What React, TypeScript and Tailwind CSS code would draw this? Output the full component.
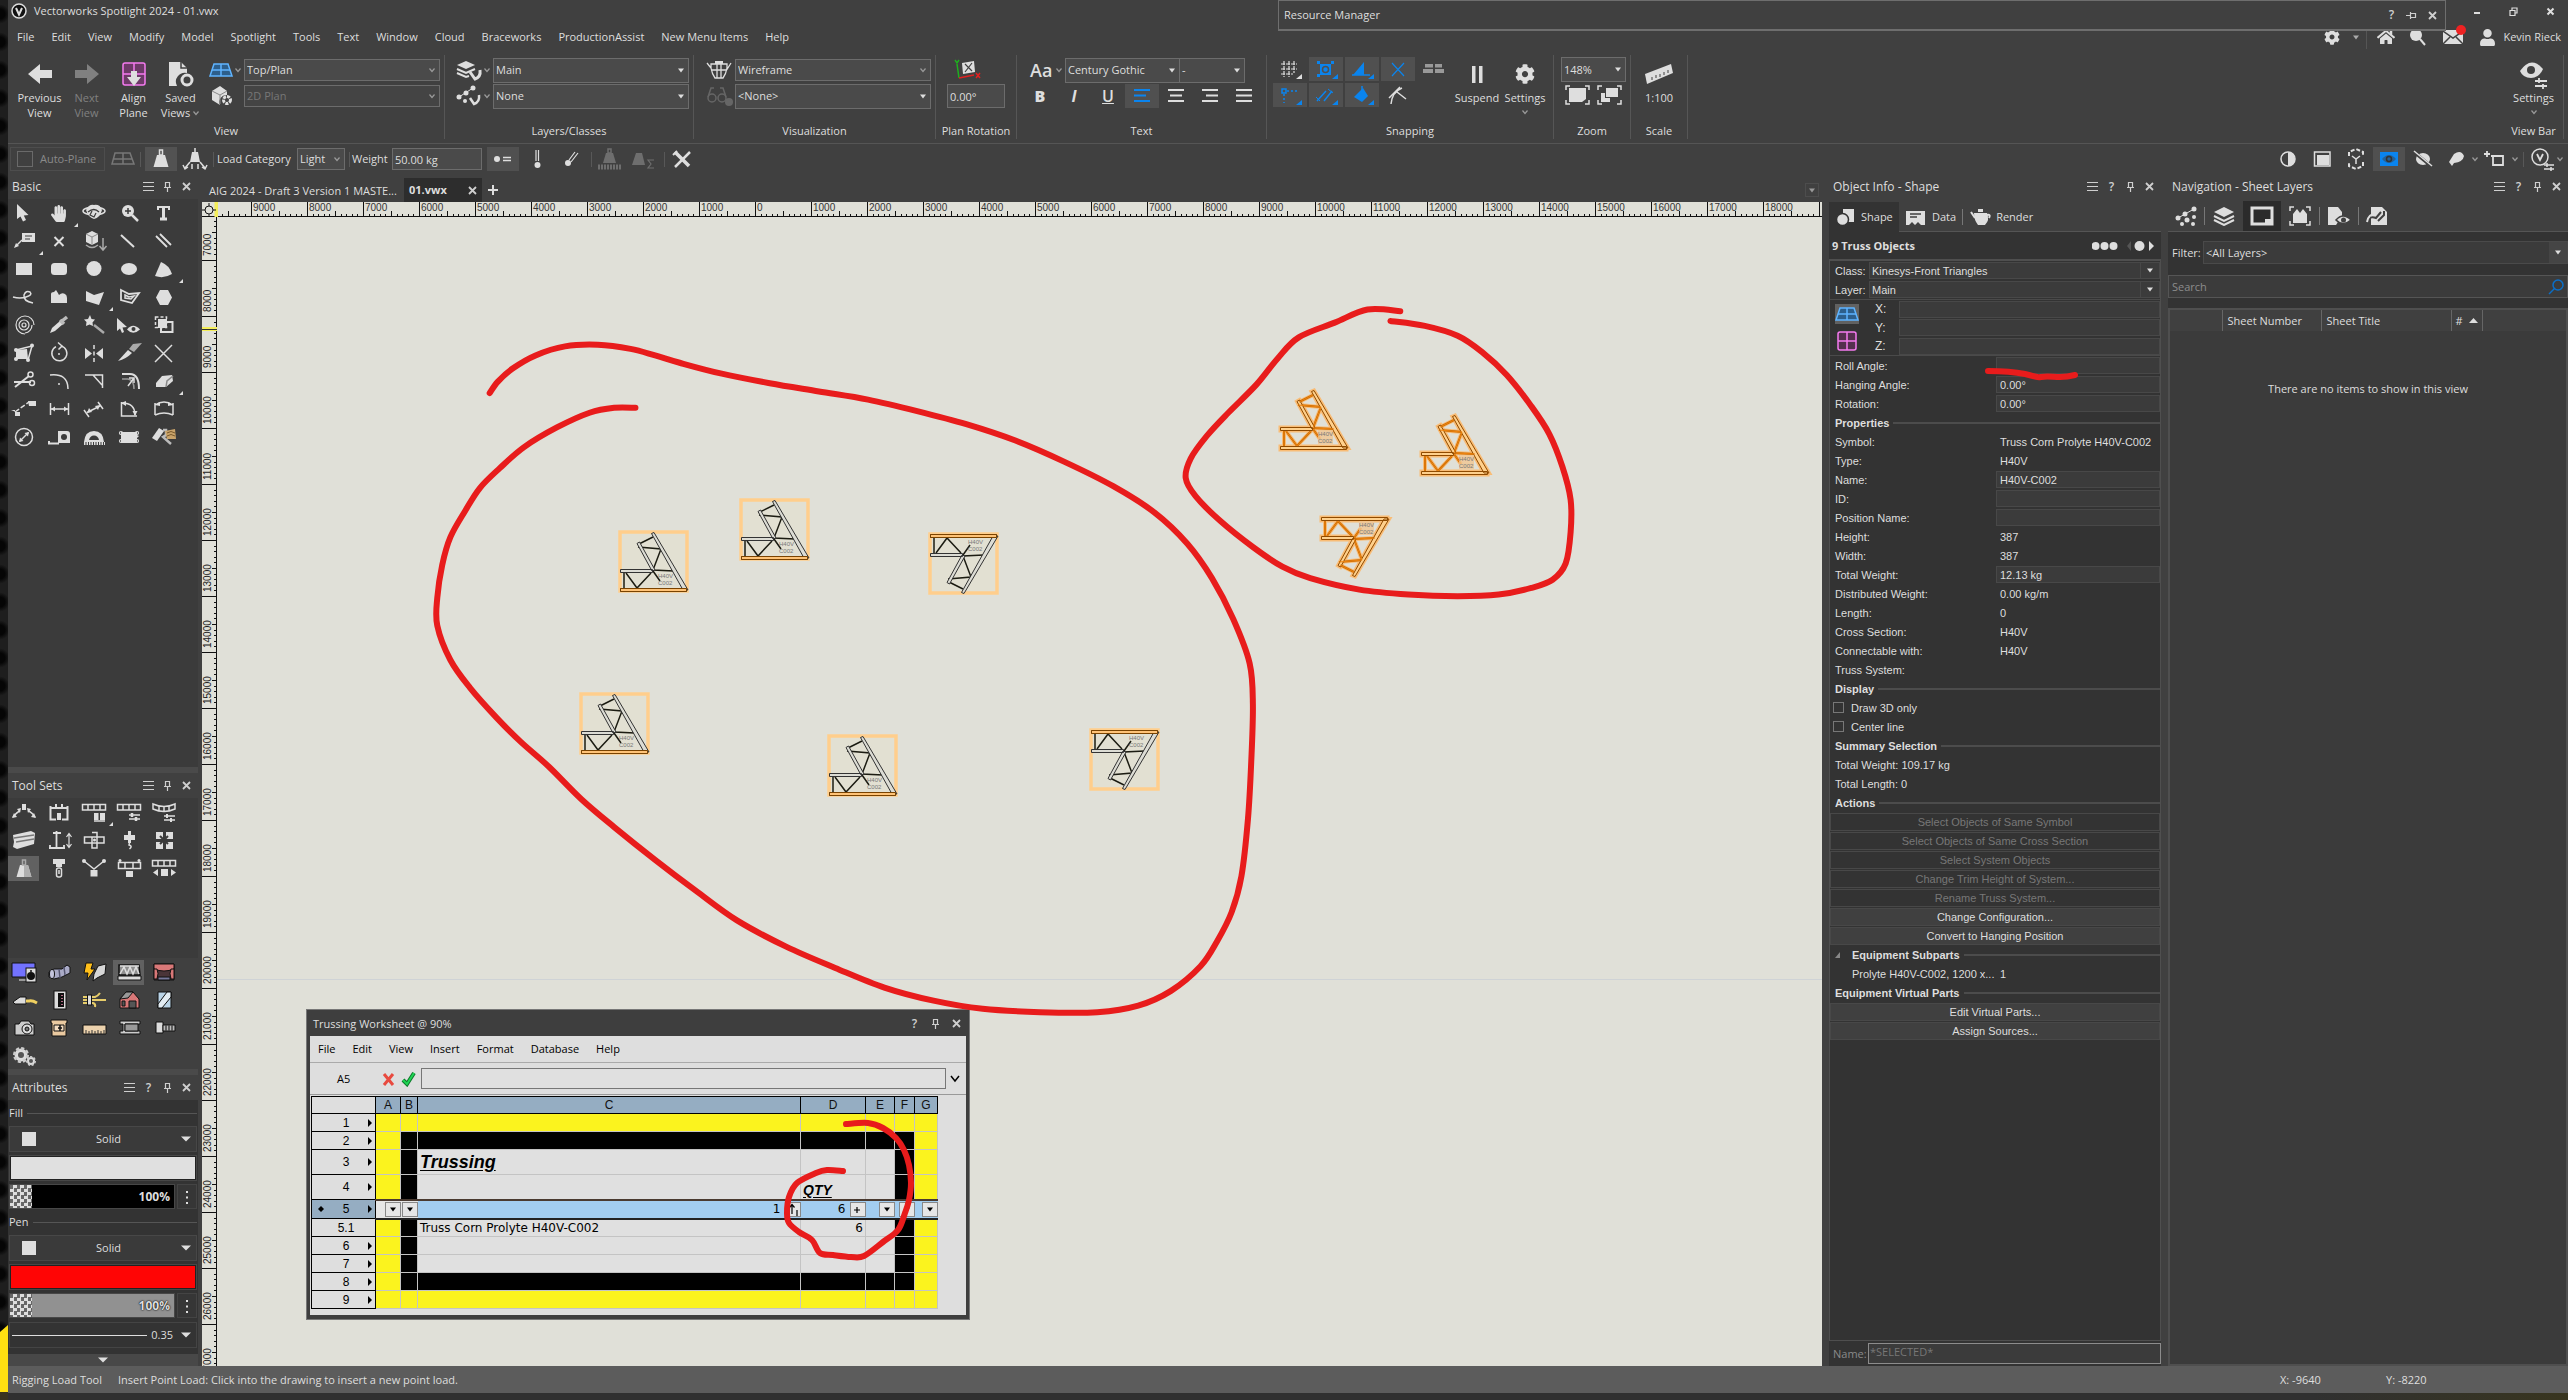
import type { ReactNode } from 'react'
import { FaHandPaper, FaHome, FaUser, FaCog } from 'react-icons/fa'

type Pt = [number, number]

/* ---------- helpers ---------- */

// Catmull-Rom spline through the points, written as cubic segments
function smooth(pts: Pt[], k = 1) {
  const p = pts.map(([x, y]) => [x * k, y * k])
  let d = `M${p[0][0]} ${p[0][1]}`
  for (let i = 0; i < p.length - 1; i++) {
    const a = p[i - 1] ?? p[i]
    const b = p[i]
    const c = p[i + 1]
    const e = p[i + 2] ?? c
    d += `C${b[0] + (c[0] - a[0]) / 6} ${b[1] + (c[1] - a[1]) / 6} ${c[0] - (e[0] - b[0]) / 6} ${c[1] - (e[1] - b[1]) / 6} ${c[0]} ${c[1]}`
  }
  return d
}

function Svg({ w = 28, h = 24, className = '', children }: { w?: number; h?: number; className?: string; children: ReactNode }) {
  return (
    <svg width={w} height={h} viewBox={`0 0 ${w} ${h}`} className={`shrink-0 ${className}`} fill="none" stroke="currentColor" strokeWidth="1.5" aria-hidden="true">
      {children}
    </svg>
  )
}

const F = { fill: 'currentColor', stroke: 'none' }

function Caret({ className = '' }: { className?: string }) {
  return (
    <Svg w={8} h={6} className={`text-[#9a9a9a] ${className}`}>
      <path d="M1.5 1.5 4 4.5 6.5 1.5" strokeWidth="1.2" />
    </Svg>
  )
}

function Tri({ className = '' }: { className?: string }) {
  return (
    <Svg w={8} h={5} className={className}>
      <path d="M1 0.5h6L4 4.5Z" {...F} />
    </Svg>
  )
}

/* ---------- icons ---------- */

const planeIcon = (
  <Svg w={26} h={20}>
    <path d="M6 4H20L24 16H2Z" fill="#2d5f8c" stroke="#5fb4ff" />
    <path d="M13 4V16M4 10H22" stroke="#5fb4ff" />
  </Svg>
)

const basicTools: { name: string; icon: ReactNode; more?: boolean }[] = [
  { name: 'Selection', icon: <Svg><path d="M7 3V18L10.5 15.5 13 20.5 16 19 13.8 14.5 18.5 14Z" {...F} /></Svg> },
  { name: 'Pan', more: true, icon: <FaHandPaper size={17} /> },
  {
    name: 'Flyover',
    icon: (
      <Svg>
        <path d="M6 9Q9 3 14 4 20 3 22 9 20 17 14 18 8 16 6 9Z" {...F} />
        <ellipse cx="14" cy="10" rx="11" ry="4" />
        <path d="M8 11Q14 6 19 11M12 10l-2 4 4 2 2-4" stroke="#3b3b3b" strokeWidth="1.2" />
      </Svg>
    ),
  },
  {
    name: 'Zoom',
    icon: (
      <Svg>
        <circle cx="13" cy="10" r="6" {...F} />
        <path d="M17 14l6 6" strokeWidth="2.5" />
        <path d="M13 7v6M10 10h6" stroke="#3b3b3b" />
      </Svg>
    ),
  },
  { name: 'Text', icon: <Svg><path d="M8 5V9M7 6H20M19 5V9" strokeWidth="2" /><path d="M13.5 6V18M10 18H17" strokeWidth="3" /></Svg> },
  {
    name: 'Callout',
    more: true,
    icon: (
      <Svg>
        <rect x="12" y="4" width="13" height="9" {...F} />
        <path d="M15 7h7M15 10h5" stroke="#3b3b3b" strokeWidth="1" />
        <path d="M12 11 6 17" />
        <path d="M4 19l2-5 3 3Z" {...F} />
      </Svg>
    ),
  },
  { name: 'Locus', icon: <Svg><path d="M9.5 8 18.5 17M18.5 8 9.5 17" strokeWidth="2" /></Svg> },
  {
    name: 'Push/Pull',
    icon: (
      <Svg>
        <path d="M6 5 12 2 18 5V13L12 16 6 13Z" {...F} />
        <path d="M6 5 12 8 18 5M12 8V16" stroke="#8a8a8a" strokeWidth="1" />
        <path d="M6 16Q12 21 18 16" stroke="#aaa" />
        <path d="M23 9V20M19.5 17l3.5 4 3.5-4" stroke="#aaa" />
      </Svg>
    ),
  },
  { name: 'Line', icon: <Svg><path d="M6 6 19 18" strokeWidth="2" /></Svg> },
  { name: 'Double Line', icon: <Svg><path d="M6 7 17 18M10 5 21 16" strokeWidth="1.8" /></Svg> },
  { name: 'Rectangle', icon: <Svg><rect x="6" y="6" width="16" height="12" {...F} /></Svg> },
  { name: 'Rounded Rectangle', icon: <Svg><rect x="6" y="6" width="16" height="12" rx="3.5" {...F} /></Svg> },
  { name: 'Circle', icon: <Svg><circle cx="14" cy="11.5" r="7.5" {...F} /></Svg> },
  { name: 'Oval', icon: <Svg><ellipse cx="14" cy="12" rx="8" ry="6" {...F} /></Svg> },
  { name: 'Arc', more: true, icon: <Svg><path d="M11 5Q19 8 22 17 14 22 5 19Z" {...F} /></Svg> },
  { name: 'Freehand', icon: <Svg><path d="M3 12Q10 14 16 12Q23 10 20 7Q16 5 14 10Q13 16 23 18" /></Svg> },
  { name: 'Polyline', icon: <Svg><path d="M6 18V9Q6 7 9 7L11 5Q13 8 14 10Q17 7 20 9Q22 10 22 13V18Z" {...F} /></Svg> },
  { name: 'Polygon', more: true, icon: <Svg><path d="M6 6 14 10 24 7 19 20 6 16Z" {...F} /></Svg> },
  { name: 'Double Polygon', icon: <Svg><path d="M6 5 14 9 24 8 17 18 6 15Z" strokeWidth="1.8" /><path d="M10 10 14 12 19 11 16 14 10 13Z" strokeWidth="1.5" /></Svg> },
  { name: 'Regular Polygon', icon: <Svg><path d="M10 5H18L22 12.5 18 20H10L6 12.5Z" {...F} /></Svg> },
  { name: 'Spiral', icon: <Svg><circle cx="14" cy="12" r="2" strokeWidth="1.2" /><circle cx="14" cy="12" r="5" strokeWidth="1.2" /><path d="M24 12A9 9 0 1 0 15 21M22 12A8 8 0 0 1 15 20" strokeWidth="1.2" /></Svg> },
  { name: 'Eyedropper', icon: <Svg><path d="M5 20 7 15 15 8 18 11 10 18Z" {...F} /><path d="M15 7 19 11M17 8 22 4" stroke="#bbb" strokeWidth="3.5" /></Svg> },
  { name: 'Magic Wand', icon: <Svg><path d="M10 2 11.5 6 15 6.5 12.5 9.5 13 13 9.5 11.5 6 13 6.5 9 4 6.5 8 6Z" {...F} /><path d="M14 12 24 20" stroke="#aaa" strokeWidth="2.5" /></Svg> },
  {
    name: 'Select Similar',
    icon: (
      <Svg>
        <path d="M2 5V18L5 15.5 7 20 9 19 7.5 14.5 12 14Z" {...F} />
        <path d="M12 16.5Q18 9 25 16.5 18 23 12 16.5Z" {...F} />
        <circle cx="18.5" cy="16" r="2" fill="#3b3b3b" stroke="none" />
      </Svg>
    ),
  },
  { name: 'Symbol Insertion', icon: <Svg><path d="M11 9H22.5V19H11Z" strokeWidth="2" /><rect x="8" y="6" width="9" height="9" {...F} /><path d="M5.5 4H16.5V14.5H5.5Z" strokeDasharray="3 2" /></Svg> },
  {
    name: 'Reshape',
    icon: (
      <Svg>
        <path d="M6 9 17 8 18 18H6Z" {...F} />
        <path d="M6 9 22 5 18 19" />
        <g {...F}>
          <circle cx="6" cy="9" r="2" /><circle cx="22" cy="4.5" r="2" /><circle cx="6" cy="18" r="2" /><circle cx="18" cy="19" r="2" />
        </g>
      </Svg>
    ),
  },
  { name: 'Rotate', icon: <Svg><path d="M16 5A7.5 7.5 0 1 1 11 5.6" /><path d="M13 1.5 17 5 13.5 8.5" /><circle cx="14" cy="13" r="1" {...F} /></Svg> },
  { name: 'Mirror', icon: <Svg><path d="M5 7 12 12.5 5 18ZM23 7 16 12.5 23 18Z" {...F} /><path d="M14 4V21" strokeDasharray="4 2.5" /></Svg> },
  { name: 'Split', icon: <Svg><path d="M3 20 13 9 17 12Q11 18 3 20Z" {...F} /><path d="M14 8 18 3 27 2 19 11Z" fill="#aaa" stroke="none" /></Svg> },
  { name: 'Connect/Combine', icon: <Svg><path d="M5 4 22 21M22 4 5 21" /></Svg> },
  { name: 'Trim', icon: <Svg><path d="M5 18 19 7M4 13H21" strokeWidth="2" /><circle cx="20.5" cy="5.5" r="2.5" /><circle cx="22" cy="14" r="2.5" /></Svg> },
  { name: 'Fillet', icon: <Svg><path d="M5 6Q23 4 23 20" /><circle cx="14" cy="15" r="1" {...F} /></Svg> },
  { name: 'Chamfer', icon: <Svg><path d="M5 6H22.5V19M13 6 22 16" /></Svg> },
  { name: 'Offset', icon: <Svg><path d="M7 5H15Q24 5 24 20" strokeWidth="2" /><path d="M7 10H13Q19 11 19 20" stroke="#999" /><path d="M13 17 19 9M14 9H19V14" /></Svg> },
  { name: 'Eraser', more: true, icon: <Svg><path d="M6 14 12 7 22 6 23 12 16 18H6Z" {...F} /><path d="M16 18 17 12 23 7" stroke="#888" /></Svg> },
  { name: 'Clip', icon: <Svg><path d="M5 15 19 5" strokeDasharray="5 2" /><path d="M1 13H5V19H10V15H6ZM18 4H26V9H19Z" {...F} /></Svg> },
  { name: 'Linear Dimension', icon: <Svg><path d="M5.5 6V18M23.5 6V18M6 12H23" /><path d="M6 12 10 9.5V14.5ZM23 12 19 9.5V14.5Z" {...F} /></Svg> },
  { name: 'Angled Dimension', icon: <Svg><path d="M4 13 9 20M18 5 23 12M7 15.5 20 9" /><path d="M7 16 9 11 12 15ZM20 8 18 13 15 9Z" {...F} /></Svg> },
  { name: 'Angular Dimension', icon: <Svg><path d="M6.5 5V19H22M7 6Q20 6 20 18" /><path d="M6 6 11 4V9ZM20 19 17.5 14H22.5Z" {...F} /></Svg> },
  { name: 'Arc Dimension', icon: <Svg><path d="M5 8Q14 2 23 8M5 6V18M23 6V18M5 18Q14 14 23 18" /><path d="M5 8 10 5V9ZM23 8 18 5V9Z" {...F} /></Svg> },
  { name: 'Radial Dimension', icon: <Svg><circle cx="14" cy="12" r="8.5" /><path d="M9.5 16.5 18.5 7.5" /><path d="M9 17 10 12.5 13.5 16ZM19 7 18 11.5 14.5 8Z" {...F} /></Svg> },
  { name: 'Tape Measure', icon: <Svg><path d="M13 6H22Q25 6 25 9V18H13Z" {...F} /><circle cx="19" cy="12" r="3" fill="#3b3b3b" stroke="none" /><path d="M4 16V18.5H14" strokeWidth="2" /></Svg> },
  { name: 'Protractor', icon: <Svg><path d="M4 17Q5 6 14 6T24 17Z" {...F} /><path d="M9 15Q10 10.5 14 10.5T19 15Z" fill="#3b3b3b" stroke="none" /><path d="M4 18.5H25" strokeDasharray="1.5 1" strokeWidth="3" /></Svg> },
  { name: 'Section', icon: <Svg><path d="M6 7H22V10L24 11 22 13V18H6Z" {...F} /><g fill="none" strokeWidth="1.2"><circle cx="6" cy="8" r="1.5" /><circle cx="6" cy="16" r="1.5" /><circle cx="22" cy="8" r="1.5" /><circle cx="22" cy="16" r="1.5" /></g></Svg> },
  {
    name: 'Attribute Mapping',
    icon: (
      <Svg>
        <path d="M2 13 9 3 14 6 7 16Z" {...F} />
        <path d="M13 5H16V10L13 12 21 19" stroke="#bbb" strokeWidth="2.5" />
        <path d="M15 6 25 4 26 14 17 14Z" fill="#c9a36a" stroke="none" />
        <path d="M17 8Q21 5 25 8M17 11Q21 8 25 11" stroke="#7a5a2c" strokeWidth="1" />
      </Svg>
    ),
  },
]

const truss = <path d="M2.5 4.5H25.5V10H2.5ZM8 4.5V10M14 4.5V10M20 4.5V10" />

const rigTools: { name: string; icon: ReactNode; more?: boolean; active?: boolean }[] = [
  { name: 'Hoist', icon: <Svg><path d="M3 17Q7 12 10 11M18 11Q22 12 25 17" /><path d="M12 4H16V10H12ZM7 9 11 8 10 13ZM21 9 17 8 18 13ZM2 18 4 13 7 17ZM26 18 24 13 21 17Z" {...F} /></Svg> },
  { name: 'House Rigging', icon: <Svg><path d="M5.5 6V19.5H11M17 19.5H22.5V6M5 8H23M11 4V9M17 4V9" strokeWidth="2" /><path d="M12 13H16V20H12Z" {...F} /></Svg> },
  { name: 'Insert Truss', more: true, icon: <Svg>{truss}<path d="M14 13H18.5V20H14ZM20 13H25V20H20Z" {...F} /><path d="M14 21H25" /></Svg> },
  { name: 'Straight Truss', icon: <Svg>{truss}<path d="M14 15H25M14 19H25" /><path d="M17 13V17M21 17V21" strokeWidth="2.5" /></Svg> },
  { name: 'Curved Truss', icon: <Svg><path d="M3 4Q14 9 25 4V9Q14 14 3 9ZM9 6V11M14 7V12M19 6V11" /><path d="M14 16H25M14 20H25" /><path d="M17 14V18M21 18V22" strokeWidth="2" /></Svg> },
  { name: 'Soft Goods', icon: <Svg><path d="M3 7 21 3 25 5 24 16 7 21 3 19 4 14Z" {...F} /><path d="M4 10 24 7M6 14 24 11" stroke="#777" /></Svg> },
  { name: 'Pipe', icon: <Svg><path d="M11.5 3V20M4 20H20M8 5H16M5 17V21M19 17V21" strokeWidth="1.8" /><path d="M24 6V19M21.5 9 24 5.5 26.5 9M21.5 16 24 19.5 26.5 16" strokeWidth="1.2" /></Svg> },
  { name: 'Truss Cross', icon: <Svg><path d="M4.5 9H24V15H4.5ZM12 4.5H17V9M12 15V20H17V15M12 9V15M17 9V15" /><circle cx="14.5" cy="12" r="1.5" {...F} /></Svg> },
  { name: 'Chain Hoist', icon: <Svg><path d="M13 3H16V7H20V12H16V15H13V12H9V7H13Z" {...F} /><path d="M14.5 15 14 17Q18 18 14.5 21" /></Svg> },
  { name: 'Base Plate', icon: <Svg><path d="M6 4H13V11H6ZM16 4H23V11H16ZM6 14H13V21H6ZM16 14H23V21H16Z" {...F} /><path d="M10 8 18 16M18 8 10 16" stroke="#3b3b3b" strokeWidth="2" /></Svg> },
  { name: 'Rigging Load', active: true, icon: <Svg><path d="M10 9H18L21.5 21H6.5Z" {...F} /><path d="M14 9H18L21.5 21H14Z" fill="#b0b0b0" stroke="none" /><rect x="12.5" y="4" width="3" height="5" stroke="#aaa" /></Svg> },
  { name: 'Load Cell', icon: <Svg><path d="M8 3H20V8H17V11H11V8H8Z" {...F} /><rect x="11.5" y="12" width="5" height="9" rx="2" /><path d="M14 14V18" /></Svg> },
  { name: 'Bridle', icon: <Svg><path d="M4 5 14 13 24 5" /><circle cx="4" cy="5" r="2" {...F} /><circle cx="24" cy="5" r="2" {...F} /><path d="M10.5 14H17.5V20.5H10.5Z" {...F} /></Svg> },
  { name: 'Ground Support', icon: <Svg><path d="M3.5 6.5H25.5V12.5H3.5ZM10 6.5V12.5M18 6.5V12.5" /><circle cx="5" cy="4.5" r="1.5" {...F} /><circle cx="24" cy="4.5" r="1.5" {...F} /><path d="M11 15H18V21H11Z" {...F} /></Svg> },
  { name: 'Distributed Load', icon: <Svg>{truss}<path d="M11 13H18V20H11ZM3 16.5 8 13V20ZM26 16.5 21 13V20Z" {...F} /></Svg> },
]

const K = { stroke: '#111', strokeWidth: 1 }

const toolSets: { name: string; icon: ReactNode; active?: boolean }[] = [
  { name: 'AV', icon: <Svg><path d="M2 3H25V17H2Z" fill="#7272ff" {...K} /><path d="M9 20H17" stroke="#999" strokeWidth="2" /><rect x="16" y="8" width="10" height="14" fill="#ddd" {...K} /><circle cx="21" cy="16" r="4" fill="#111" stroke="none" /><circle cx="21" cy="11" r="1" fill="#111" stroke="none" /></Svg> },
  { name: 'Lighting', icon: <Svg><path d="M4 12 9 9 17 9 22 5 25 7V13L17 17 9 19 4 17Z" fill="#a9aac6" {...K} /><ellipse cx="7" cy="14" rx="2.5" ry="4.5" fill="#c4c5dd" {...K} /><path d="M14 9 15 18M19 7 20 15" stroke="#555670" /></Svg> },
  { name: 'Power', icon: <Svg><path d="M6 3H13L11 9H15L7 20 8 13H4Z" fill="#ffbf1a" {...K} /><path d="M14 14 18 6 26 4 25 14 17 18 13 21Z" fill="#d6d6d6" {...K} /></Svg> },
  { name: 'Rigging', active: true, icon: <Svg><path d="M4 5H24L25 15H4Z" fill="#8f8f8f" stroke="#111" /><path d="M5 6H24M5 14 9 7 12 14 15 7 18 14 21 7 24 14" stroke="#ddd" /><path d="M3 16H26V20H3Z" fill="#ddd" {...K} /></Svg> },
  { name: 'Stage', icon: <Svg><path d="M4 4H24V20H4Z" fill="#4a3438" {...K} /><path d="M4 4H24V9Q14 13 4 9Z" fill="#d97878" {...K} /><path d="M4 9H7Q9 13 7 19H4ZM24 9H21Q19 13 21 19H24Z" fill="#d97878" {...K} /><path d="M8 17H20V20H8Z" fill="#777799" {...K} /></Svg> },
  { name: 'Cable', icon: <Svg><path d="M3 14 10 9H16V16H5Z" fill="#ddd" {...K} /><path d="M16 13H19Q22 12 27 15" stroke="#f0d060" strokeWidth="3" /></Svg> },
  { name: 'Rack', icon: <Svg><rect x="9" y="3" width="12" height="18" fill="#ddd" {...K} /><rect x="13" y="5" width="6" height="14" fill="#111" stroke="none" /><path d="M17 7V17" stroke="#e888aa" strokeDasharray="1 2" /></Svg> },
  { name: 'Cable Bundle', icon: <Svg><path d="M3 9H15Q18 8 20 5M3 12H26M3 15H13Q16 16 15 19" stroke="#e7cd6a" strokeWidth="2" /><rect x="7.5" y="7" width="4" height="10" fill="#ddd" {...K} /></Svg> },
  { name: 'Building', icon: <Svg><path d="M5 11 11 4H18L24 11V20H5Z" fill="#d97878" {...K} /><path d="M5 11 11 4H18L13 10Z" fill="#999" {...K} /><path d="M14 13H21V20H14ZM7 13H10V18H7Z" fill="#555" {...K} /></Svg> },
  { name: 'Glass', icon: <Svg><path d="M8 4H21V20H8Z" fill="#b9d3e6" {...K} /><path d="M17 4H21V9L12 20H8V16Z" fill="#e2ecf2" {...K} /></Svg> },
  { name: 'Camera', icon: <Svg><path d="M5 8H9L11 5H19L21 8H24V19H5Z" fill="#ccc" {...K} /><circle cx="17" cy="13" r="5" fill="#ddd" {...K} /><circle cx="17" cy="13" r="2" fill="#777" {...K} /></Svg> },
  { name: 'Furniture', icon: <Svg><path d="M6 4H22V7H21V20H7V7H6Z" fill="#eac9a0" {...K} /><path d="M9 9H19V15H9Z" fill="#f4dcc0" {...K} /><path d="M15 9V15M13 12H17" stroke="#111" /></Svg> },
  { name: 'Ruler', icon: <Svg><path d="M3 9H26V18H3Z" fill="#ecd2ad" {...K} /><path d="M6 18V14M9 18V15M12 18V14M15 18V15M18 18V14M21 18V15M24 18V14" stroke="#333" strokeWidth="1" /></Svg> },
  { name: 'Steel', icon: <Svg><path d="M5 5H25V8H10V15H25V18H5V15H8V8H5Z" fill="#ccc" {...K} /><path d="M10 8H23V15H10Z" fill="#999" {...K} /></Svg> },
  { name: 'Fasteners', icon: <Svg><path d="M6 6H13V17H6Z" fill="#ddd" {...K} /><path d="M13 9H25V15H13Z" fill="#bbb" {...K} /><path d="M16 9V15M19 9V15M22 9V15" stroke="#444" /></Svg> },
  { name: 'Machine', icon: <Svg><circle cx="11" cy="11" r="6.5" fill="#ddd" stroke="#ccc" strokeWidth="3" strokeDasharray="3 2" /><circle cx="11" cy="11" r="3" fill="#555" stroke="none" /><circle cx="21" cy="17" r="4" fill="#ddd" stroke="#ccc" strokeWidth="2" strokeDasharray="2 1.5" /><circle cx="21" cy="17" r="2" fill="#555" stroke="none" /></Svg> },
]

/* ---------- shared controls ---------- */

function MiniIcon({ kind }: { kind: 'menu' | 'help' | 'pin' | 'close' }) {
  return (
    <button type="button" aria-label={kind} className="flex h-5 w-[19px] items-center justify-center text-[#cfcfcf]">
      {kind === 'help' ? (
        <span className="text-[12px] leading-none font-semibold">?</span>
      ) : (
        <Svg w={11} h={11}>
          {kind === 'menu' && <path d="M0 1.5H11M0 5.5H11M0 9.5H11" strokeWidth="1" />}
          {kind === 'pin' && <path d="M3.5 1V6M7.5 1V6M3 1.5H8M2 6.5H9M5.5 7V11" strokeWidth="1.2" />}
          {kind === 'close' && <path d="M2 2 9 9M9 2 2 9" strokeWidth="1.8" />}
        </Svg>
      )}
    </button>
  )
}

function PanelHeader({ title, help }: { title: string; help?: boolean }) {
  return (
    <div className="flex h-[25px] shrink-0 items-center pr-[2px] pl-1">
      <h2 className="flex-1 text-[12px]">{title}</h2>
      <MiniIcon kind="menu" />
      {help && <MiniIcon kind="help" />}
      <MiniIcon kind="pin" />
      <MiniIcon kind="close" />
    </div>
  )
}

function Select({ label, value, className = '', dim, thin }: { label: string; value: string; className?: string; dim?: boolean; thin?: boolean }) {
  return (
    <div className={`relative flex items-center border border-[#6c6c6c] ${dim ? 'bg-[#444] text-[#777]' : 'bg-[#4a4a4a]'} ${className}`}>
      <select aria-label={label} className="size-full appearance-none pr-4 pl-[2px] outline-none">
        <option>{value}</option>
      </select>
      <div className="pointer-events-none absolute right-[3px]">{thin ? <Caret /> : <Tri />}</div>
    </div>
  )
}

function ToolGrid({ tools }: { tools: { name: string; icon: ReactNode; more?: boolean; active?: boolean }[] }) {
  return (
    <div className="grid grid-cols-[repeat(5,35px)] content-start">
      {tools.map((t) => (
        <button key={t.name} type="button" aria-label={t.name} className="relative flex h-7 w-[35px] items-center">
          <span className={`flex h-[25px] w-[31px] items-center justify-center ${t.active ? 'bg-[#616161]' : ''}`}>{t.icon}</span>
          {t.more && (
            <svg width="4" height="4" className="absolute right-0 bottom-0" aria-hidden="true">
              <path d="M4 0V4H0Z" fill="#dedede" />
            </svg>
          )}
        </button>
      ))}
    </div>
  )
}

/* ---------- top ---------- */

const menus = ['File', 'Edit', 'View', 'Modify', 'Model', 'Spotlight', 'Tools', 'Text', 'Window', 'Cloud', 'Braceworks', 'ProductionAssist', 'New Menu Items', 'Help']

function TitleBar() {
  return (
    <header className="relative shrink-0">
      <div className="flex h-[22px] items-center pl-[3px]">
        <Svg w={16} h={16}>
          <circle cx="8" cy="8" r="7" fill="#111" stroke="#ddd" />
          <path d="M5 5 8 11.5 11 5" strokeWidth="2" />
        </Svg>
        <h1 className="ml-[7px] flex-1">Vectorworks Spotlight 2024 - 01.vwx</h1>
        <button type="button" aria-label="Minimize" className="flex w-[37px] justify-center"><span className="mt-1 h-[2px] w-[6px] bg-[#dedede]" /></button>
        <button type="button" aria-label="Restore" className="flex w-[37px] justify-center">
          <Svg w={9} h={9}><path d="M3 3V1H8V6H6M1 3.5H6V8.5H1Z" strokeWidth="1.2" /></Svg>
        </button>
        <button type="button" aria-label="Close" className="flex w-9 justify-center">
          <Svg w={9} h={9}><path d="M1.5 1.5 7.5 7.5M7.5 1.5 1.5 7.5" strokeWidth="2" /></Svg>
        </button>
      </div>
      <div className="flex h-[30px] items-center pr-[7px] pl-[9px]">
        <nav className="flex flex-1 gap-[17px]" aria-label="Main menu">
          {menus.map((m) => (
            <button key={m} type="button">{m}</button>
          ))}
        </nav>
        <div className="flex items-center">
          <FaCog size={16} className="mr-3" />
          <Tri className="mr-[6px] text-[#aaa]" />
          <span className="mr-[10px] h-6 w-px bg-[#555]" />
          <FaHome size={18} className="mr-[14px]" />
          <Svg w={18} h={18} className="mr-4"><circle cx="7" cy="7" r="6" {...F} /><path d="M11 11 16 17" strokeWidth="2" /></Svg>
          <span className="relative mr-4">
            <Svg w={20} h={16}><path d="M0 1H20V15H0Z" {...F} /><path d="M0 2 10 9 20 2M0 15 7 8M20 15 13 8" stroke="#404040" /></Svg>
            <span className="absolute -top-1 -right-[3px] size-[10px] rounded-full bg-[#ee2222]" />
          </span>
          <FaUser size={17} className="mr-[7px]" />
          <span>Kevin Rieck</span>
        </div>
      </div>
      {/* floating palette over the title bar */}
      <div className="absolute top-0 right-[122px] flex h-[31px] w-[1168px] items-center border border-b-2 border-[#6e6e6e] bg-[#404040] pr-[3px] pl-[5px]">
        <h2 className="flex-1">Resource Manager</h2>
        <MiniIcon kind="help" />
        <span className="flex w-[22px] rotate-90 justify-center"><MiniIcon kind="pin" /></span>
        <MiniIcon kind="close" />
      </div>
    </header>
  )
}

function Group({ label, className = '', children }: { label: string; className?: string; children: ReactNode }) {
  return (
    <section className={`relative flex h-[84px] shrink-0 flex-col border-r border-[#565656] ${className}`}>
      <div className="flex h-[67px] pt-[2px]">{children}</div>
      <h3 className="text-center leading-[17px]">{label}</h3>
    </section>
  )
}

function BigButton({ icon, lines, dim, caret, className = 'w-[47px]' }: { icon: ReactNode; lines: string[]; dim?: boolean; caret?: boolean; className?: string }) {
  return (
    <button type="button" className={`flex flex-col items-center ${dim ? 'text-[#808080]' : ''} ${className}`}>
      <span className="flex h-[33px] items-center justify-center">{icon}</span>
      {lines.map((l, i) => (
        <span key={l} className="flex items-center gap-[2px] leading-[15px]">
          {l}
          {caret && i === lines.length - 1 && lines.length > 1 && <Caret />}
        </span>
      ))}
      {caret && lines.length === 1 && <Caret className="mt-1" />}
    </button>
  )
}

function SnapButton({ name, on, more, children }: { name: string; on?: boolean; more?: boolean; children: ReactNode }) {
  return (
    <button type="button" aria-label={name} className={`relative flex h-6 w-[34px] items-center justify-center ${on ? 'bg-[#505050] text-[#0a84ee]' : ''}`}>
      <Svg w={24} h={20}>{children}</Svg>
      {more && (
        <svg width="6" height="5" className="absolute right-[5px] bottom-[2px]" aria-hidden="true">
          <path d="M6 0V5H0Z" fill="currentColor" />
        </svg>
      )}
    </button>
  )
}

function AlignGlyph({ x }: { x: number[] }) {
  return (
    <Svg w={18} h={14}>
      {x.map((s, i) => (
        <path key={i} d={`M${s} ${1 + i * 5.5}h${i === 1 ? 12 : 16}`} strokeWidth="2" />
      ))}
    </Svg>
  )
}

function Ribbon() {
  return (
    <div className="flex h-[92px] shrink-0 border-b border-[#555] pt-[3px]">
      <Group label="View" className="w-[437px]">
        <div className="ml-2 flex">
          <BigButton lines={['Previous', 'View']} icon={<Svg w={26} h={24}><path d="M1 12 13 2V8H25V16H13V22Z" {...F} /></Svg>} />
          <BigButton dim lines={['Next', 'View']} icon={<Svg w={26} h={24}><path d="M25 12 13 2V8H1V16H13V22Z" {...F} /></Svg>} />
          <BigButton
            lines={['Align', 'Plane']}
            icon={
              <Svg w={26} h={26}>
                <rect x="2" y="2" width="22" height="22" rx="2" fill="#6d3a68" stroke="#f57bf0" />
                <path d="M13 2V10M2 13H24" stroke="#f57bf0" />
                <path d="M10 10H16V16H20L13 25 6 16H10Z" {...F} />
              </Svg>
            }
          />
          <BigButton
            caret
            lines={['Saved', 'Views']}
            icon={
              <Svg w={28} h={26}>
                <path d="M2 1H14L20 7V12A9 9 0 0 0 10 25H2Z" {...F} />
                <path d="M14 1V7H20" stroke="#404040" />
                <circle cx="20" cy="19" r="5" strokeWidth="3" />
              </Svg>
            }
          />
        </div>
        <div className="flex flex-1 flex-col pl-1">
          <div className="flex h-[26px] items-center">
            {planeIcon}
            <Caret className="mr-[2px]" />
            <Select thin label="Standard view" value="Top/Plan" className="h-[22px] w-[196px]" />
          </div>
          <div className="flex h-[26px] items-center">
            <Svg w={26} h={22} className="mr-[10px]">
              <path d="M4 6 12 1 19 6V10A7 7 0 0 0 12 20L4 15Z" {...F} />
              <path d="M4 6 12 10 19 6M12 10V19" stroke="#888" strokeWidth="1" />
              <circle cx="19" cy="15" r="3.5" strokeWidth="3" strokeDasharray="3 1" />
            </Svg>
            <Select thin dim label="Projection" value="2D Plan" className="h-[22px] w-[196px]" />
          </div>
        </div>
      </Group>

      <Group label="Layers/Classes" className="w-[249px]">
        <div className="flex flex-col pl-[10px]">
          <div className="flex h-[26px] items-center">
            <Svg w={28} h={22}>
              <path d="M2 6 11 2 20 6 11 10Z" {...F} />
              <path d="M2 10 11 14 20 10M2 14 11 18 14 17" strokeWidth="2" />
              <path d="M15 13 20 20Q26 18 25 11" strokeWidth="3" />
            </Svg>
            <Caret className="mr-[2px]" />
            <Select label="Active layer" value="Main" className="h-[25px] w-[196px]" />
          </div>
          <div className="flex h-[26px] items-center">
            <Svg w={28} h={22}>
              <g {...F}>
                <circle cx="4" cy="12" r="2.5" /><circle cx="11" cy="8" r="2.5" /><circle cx="18" cy="3" r="2.5" /><circle cx="10" cy="16" r="2" />
              </g>
              <path d="M4 12 18 3" strokeWidth="1" />
              <path d="M15 13 19 19Q25 17 24 10" strokeWidth="2.5" />
            </Svg>
            <Caret className="mr-[2px]" />
            <Select label="Active class" value="None" className="h-[25px] w-[196px]" />
          </div>
        </div>
      </Group>

      <Group label="Visualization" className="w-[242px]">
        <div className="flex flex-col pl-3">
          <div className="flex h-[26px] items-center">
            <Svg w={29} h={22}>
              <path d="M5 5H21V9Q20 15 17 19H9Q6 15 5 9ZM1 4 5 9M25 4 20 12M5 11H21M11 5V19M15 5V19" strokeWidth="1.3" />
              <path d="M9 2H17V5H9Z" {...F} />
            </Svg>
            <Select thin label="Render mode" value="Wireframe" className="h-[22px] w-[196px]" />
          </div>
          <div className="flex h-[26px] items-center">
            <Svg w={29} h={22} className="text-[#666]">
              <circle cx="6" cy="13" r="4" /><circle cx="16" cy="13" r="4" />
              <path d="M2 12 5 3H8M20 12 17 3H14" />
              <circle cx="23" cy="17" r="4" {...F} />
            </Svg>
            <Select label="Data visualization" value="<None>" className="h-[25px] w-[196px]" />
          </div>
        </div>
      </Group>

      <Group label="Plan Rotation" className="w-[81px]">
        <div className="flex w-full flex-col items-center">
          <div className="flex h-[26px] items-center">
            <Svg w={28} h={22} className="mr-4">
              <path d="M8 4 20 2 21 13 9 15Z" {...F} />
              <path d="M11 5 18 12M18 4 11 13" stroke="#404040" strokeWidth="1.2" />
              <path d="M5 19 3 5M1 1l2 3 2-3" stroke="#1fae1f" />
              <path d="M5 19 20 16M22 14l4 5M26 14l-4 5" stroke="#e02020" />
            </Svg>
          </div>
          <input aria-label="Plan rotation angle" defaultValue="0.00°" className="mt-[1px] h-6 w-[58px] border border-[#6c6c6c] bg-[#4a4a4a] pl-[2px] outline-none" />
        </div>
      </Group>

      <Group label="Text" className="w-[250px]">
        <div className="flex w-full flex-col">
          <div className="flex h-[26px] items-center pl-[13px]">
            <span className="w-[25px] text-[18px] leading-none font-semibold">Aa</span>
            <Caret className="mr-[2px]" />
            <Select label="Font" value="Century Gothic" className="h-[25px] w-[115px]" />
            <Select label="Font size" value="-" className="-ml-px h-[25px] w-[66px]" />
          </div>
          <div className="flex h-[26px] items-center pl-[6px]">
            <button type="button" className="w-[34px] text-[16px] leading-none font-extrabold">B</button>
            <button type="button" className="w-[34px] text-[16px] leading-none font-bold italic">I</button>
            <button type="button" className="w-[34px] text-[16px] leading-none font-semibold underline">U</button>
            <button type="button" aria-label="Align left" className="flex h-6 w-[34px] items-center justify-center bg-[#505050] text-[#0a84ee]"><AlignGlyph x={[1, 1, 1]} /></button>
            <button type="button" aria-label="Align center" className="flex w-[34px] justify-center"><AlignGlyph x={[1, 3, 1]} /></button>
            <button type="button" aria-label="Align right" className="flex w-[34px] justify-center"><AlignGlyph x={[1, 5, 1]} /></button>
            <button type="button" aria-label="Justify" className="flex w-[34px] justify-center"><Svg w={18} h={14}><path d="M1 1H17M1 6.5H17M1 12H17" strokeWidth="2" /></Svg></button>
          </div>
        </div>
      </Group>

      <Group label="Snapping" className="w-[287px]">
        <div className="ml-[6px] flex flex-col gap-[2px]">
          <div className="flex gap-[2px]">
            <SnapButton name="Snap to grid" more><path d="M3 5H19M3 10H19M3 15H15M6 2V18M11 2V18M16 2V14" strokeWidth="1.2" strokeDasharray="4 1" /></SnapButton>
            <SnapButton name="Snap to object" on more>
              <path d="M6 5H17V16H6Z" {...F} /><circle cx="11.5" cy="10.5" r="3" stroke="#505050" />
              <path d="M3 2H6V5H3ZM17 2H20V5H17ZM3 15H6V18H3Z" {...F} />
            </SnapButton>
            <SnapButton name="Snap to angle" on more><path d="M3 16 14 3V16Z" {...F} /><path d="M2 16H20" /></SnapButton>
            <SnapButton name="Snap to intersection" on><path d="M6 4 18 17M18 4 6 17" strokeWidth="1.2" /></SnapButton>
            <span className="text-[#999]"><SnapButton name="Snap to distance"><path d="M3 5H11V8.5H3ZM13 5H20V8.5H13ZM1 10H11V14H1ZM13 10H22V14H13Z" {...F} /></SnapButton></span>
          </div>
          <div className="flex gap-[2px]">
            <SnapButton name="Smart points" on more><path d="M4 4H8V8H4Z" /><path d="M9 6H20M6 9V18" strokeDasharray="2 2" /></SnapButton>
            <SnapButton name="Smart edge" on more><path d="M3 16 12 6M10 16 18 6" /><path d="M2 12l4 4M14 4l5 4" strokeWidth="1" /></SnapButton>
            <SnapButton name="Snap to working plane" on more><path d="M4 12 13 3 18 11 12 17Z" {...F} /><path d="M12 1V10" /></SnapButton>
            <SnapButton name="Snap to tangent"><path d="M5 19Q6 7 16 3M3 13 14 2M11 7 20 14" /></SnapButton>
          </div>
        </div>
        <BigButton className="ml-[2px] w-12" lines={['Suspend']} icon={<Svg w={14} h={20}><path d="M2 2H5.5V19H2ZM9 2H12.5V19H9Z" {...F} /></Svg>} />
        <BigButton caret className="w-12" lines={['Settings']} icon={<FaCog size={20} />} />
      </Group>

      <Group label="Zoom" className="w-[77px]">
        <div className="flex flex-col pl-[7px]">
          <Select label="Zoom" value="148%" className="h-[25px] w-[65px]" />
          <div className="flex h-[26px] items-center gap-[7px] pl-1">
            <Svg w={25} h={20}><path d="M1 5V1H5M20 1H24V5M24 15V19H20M5 19H1V15" /><path d="M4 3H21V14L17 17H4Z" {...F} /></Svg>
            <Svg w={25} h={20}><path d="M1 5V1H5M20 1H24V5M24 15V19H20M5 19H1V15" /><path d="M9 3H21V12H9ZM4 8H8V13H13V17H4Z" {...F} /></Svg>
          </div>
        </div>
      </Group>

      <Group label="Scale" className="w-[57px]">
        <BigButton
          className="w-full"
          lines={['1:100']}
          icon={<Svg w={30} h={22}><path d="M1 11 27 1 29 10 3 21Z" {...F} /><path d="M8 17v-3M12 15v-3M16 14v-3M20 12V9M24 10V7" stroke="#404040" strokeWidth="1" /></Svg>}
        />
      </Group>

      <div className="flex-1" />
      <Group label="View Bar" className="mr-1 w-[60px]">
        <BigButton
          caret
          className="w-full"
          lines={['Settings']}
          icon={<Svg w={30} h={30}><path d="M1 12Q12-4 24 10Q20 19 12 19T1 12Z" {...F} /><circle cx="12" cy="11" r="4" fill="#404040" stroke="none" /><path d="M16 22H28M16 27H28M20 19V24M24 25V30" strokeWidth="1.8" /></Svg>}
        />
      </Group>
    </div>
  )
}

function Sep() {
  return <span className="mx-1 h-[15px] w-px bg-[#585858]" />
}

const weight = <path d="M9 8H17L20.5 20H5.5Z" {...F} />

function ModeBar() {
  return (
    <div className="flex h-[30px] shrink-0 items-center pr-1 pl-[2px]">
      <label className="flex h-6 w-[95px] items-center gap-[7px] border border-[#4d4d4d] pl-[6px] text-[#8a8a8a]">
        <input type="checkbox" className="size-4 appearance-none border border-[#6a6a6a]" />
        Auto-Plane
      </label>
      <Svg w={26} h={16} className="ml-[5px] text-[#777]"><path d="M5 2H20L24 13H2ZM13 2V13M3 8H22" /></Svg>
      <Sep />
      <button type="button" aria-label="Point load" className="flex h-6 w-8 items-center justify-center bg-[#525252]"><Svg w={26} h={24}>{weight}<rect x="11.5" y="3" width="3" height="5" /></Svg></button>
      <button type="button" aria-label="Distributed load" className="flex h-6 w-9 items-center justify-center"><Svg w={26} h={24}><path d="M10 5H16L18 15H8Z" {...F} /><path d="M13 1V5M3 21 8 15M23 21 18 15M10 17V22M16 17V22M1 18l2 4 3-2M25 18l-2 4-3-2" /></Svg></button>
      <span className="mr-[3px] h-[15px] w-px bg-[#585858]" />
      <label className="flex items-center gap-[2px]">
        <span className="w-[78px]">Load Category</span>
        <Select thin label="Load category" value="Light" className="h-[22px] w-12" />
      </label>
      <span className="mr-[2px] ml-1 h-[15px] w-px bg-[#585858]" />
      <label className="flex items-center">
        <span className="w-10">Weight</span>
        <input defaultValue="50.00 kg" className="h-[22px] w-[90px] border border-[#6c6c6c] bg-[#4a4a4a] pl-[2px] outline-none" />
      </label>
      <button type="button" aria-label="Load beside truss" className="ml-[5px] flex h-6 w-8 items-center justify-center bg-[#505050]"><Svg w={20} h={12}><circle cx="4" cy="6" r="3" {...F} /><path d="M10 4.5H18M10 7.5H18" /></Svg></button>
      <Svg w={36} h={20}><path d="M17 1V12M19.5 1V12" strokeWidth="1.2" /><circle cx="18.5" cy="16" r="3" {...F} /></Svg>
      <Svg w={32} h={20}><path d="M14 11 20 3M16 13 23 4" strokeWidth="1.2" /><circle cx="13" cy="14" r="3" {...F} /></Svg>
      <Sep />
      <Svg w={28} h={24} className="text-[#6e6e6e]"><path d="M10 6H17L20 16H7Z" {...F} /><rect x="12" y="2" width="3" height="4" /><path d="M2 20H26" strokeWidth="5" strokeDasharray="2 1" /></Svg>
      <Svg w={36} h={24} className="text-[#6e6e6e]"><path d="M12 6H18L21 18H8Z" {...F} /><path d="M30 13H24l3 4-3 4H30" strokeWidth="1.2" /></Svg>
      <Sep />
      <Svg w={26} h={22}><path d="M6 4 20 18" strokeWidth="3.5" /><path d="M21 4 6 19" strokeWidth="2.5" /><path d="M4 7 8 3" strokeWidth="2" /></Svg>

      <div className="flex-1" />
      <div className="flex items-center">
        <Svg w={34} h={20}><circle cx="17" cy="10" r="7" /><path d="M17 3A7 7 0 0 1 17 17Z" {...F} /></Svg>
        <Svg w={34} h={20}><path d="M9.5 3H25V17H9.5Z" /><path d="M12 6H24V16H12Z" {...F} /></Svg>
        <Svg w={34} h={22}><path d="M10 8V4L17 1 24 4V8M24 14V18L17 21 10 18V14" strokeDasharray="4 2" strokeWidth="2" /><path d="M13 8 17 11 21 8M17 11V16" /></Svg>
        <span className="flex h-6 w-8 items-center justify-center bg-[#505050]">
          <Svg w={18} h={14}><path d="M0 0H18V14H0Z" fill="#0a84ee" stroke="none" /><path d="M2 7Q9-1 16 7 9 15 2 7Z" fill="#404040" stroke="none" opacity=".5" /><circle cx="9" cy="7" r="2.5" stroke="#333" /></Svg>
        </span>
        <Svg w={36} h={20}><ellipse cx="18" cy="10" rx="7" ry="6" {...F} /><path d="M9 3 27 18" stroke="#404040" strokeWidth="3" /><path d="M9 2 27 17" /></Svg>
        <Svg w={30} h={20}><path d="M11 17 8 13 13 5Q20 0 23 7 22 13 13 14Z" {...F} /></Svg>
        <Caret />
        <Svg w={32} h={20}><path d="M8 2V8M5 5H11M14 6V16H24V7H12" strokeWidth="1.8" /></Svg>
        <Caret />
        <Sep />
        <Svg w={28} h={24}><circle cx="12" cy="10" r="8" /><path d="M9 7 12 13 15 7" strokeWidth="1.8" /><path d="M16 18H26M16 22H26M19 16V20M23 20V24" /></Svg>
        <Caret />
      </div>
    </div>
  )
}

/* ---------- left palettes ---------- */

function FillSection({ title, color, bar }: { title: string; color: string; bar: string }) {
  return (
    <fieldset className="flex flex-col px-[1px]">
      <div className="flex h-[26px] items-center gap-1">
        <legend>{title}</legend>
        <span className="h-px flex-1 bg-[#555]" />
      </div>
      <button type="button" className="flex h-[26px] items-center border border-[#474747] bg-[#3a3a3a] pr-[5px] pl-3">
        <span className="size-[14px] bg-[#dedede]" />
        <span className="flex-1 text-center">Solid</span>
        <Svg w={10} h={6}><path d="M0 .5H10L5 5.5Z" {...F} /></Svg>
      </button>
      <div className={`mt-[3px] h-[26px] border border-[#474747] outline-1 -outline-offset-2 outline-[#222] ${color}`} />
      <div className="mt-[3px] flex h-[25px]">
        <div className={`flex flex-1 items-center justify-between border border-[#474747] pr-1 ${bar}`}>
          <span className="h-full w-[22px] bg-[conic-gradient(#ddd_25%,#666_0_50%,#ddd_0_75%,#666_0)] bg-size-[7px_7px]" />
          <span className="text-[12px] font-bold [text-shadow:0_0_2px_#000,0_0_1px_#000]">100%</span>
        </div>
        <button type="button" aria-label={`${title} opacity options`} className="ml-[2px] flex w-5 items-center justify-center border border-[#444] bg-[#363636]">
          <Svg w={4} h={14}><path d="M2 1V14" strokeDasharray="2 3.5" strokeWidth="2" /></Svg>
        </button>
      </div>
    </fieldset>
  )
}

function LeftPalettes() {
  return (
    <aside className="flex w-[190px] shrink-0 flex-col bg-[#404040]">
      <PanelHeader title="Basic" />
      <div className="min-h-0 flex-1 bg-[#3b3b3b]">
        <ToolGrid tools={basicTools} />
      </div>
      <div className="h-[6px] shrink-0 bg-[#4a4a4a]" />
      <PanelHeader title="Tool Sets" />
      <div className="h-40 shrink-0 bg-[#3b3b3b]">
        <ToolGrid tools={rigTools} />
      </div>
      <div className="h-[111px] shrink-0 bg-[#404040]">
        <ToolGrid tools={toolSets} />
      </div>
      <div className="h-[6px] shrink-0 bg-[#4a4a4a]" />
      <PanelHeader title="Attributes" help />
      <div className="flex h-[254px] shrink-0 flex-col bg-[#333]">
        <FillSection title="Fill" color="bg-[#e0e0e0]" bar="bg-black" />
        <FillSection title="Pen" color="bg-[#ff0505]" bar="bg-[#919191]" />
        <button type="button" className="mx-[1px] mt-1 flex h-[26px] items-center gap-1 border border-[#444] pr-[5px] pl-[2px]">
          <span className="h-px flex-1 bg-[#dedede]" />
          <span className="mr-1">0.35</span>
          <Svg w={10} h={6}><path d="M0 .5H10L5 5.5Z" {...F} /></Svg>
        </button>
      </div>
      <button type="button" aria-label="More attributes" className="flex h-3 shrink-0 items-center justify-center bg-[#484848]">
        <Svg w={10} h={6}><path d="M0 .5H10L5 5.5Z" {...F} /></Svg>
      </button>
    </aside>
  )
}

/* ---------- drawing area ---------- */

const STEP = 56
const MINOR = [6, 11, 17, 22, 34, 39, 45, 50]

function HorizontalRuler() {
  return (
    <svg className="h-[15px] w-full shrink-0 bg-[#e0e0d8]" aria-hidden="true">
      <path d="M0 14.5H3000" stroke="#111" />
      {Array.from({ length: 29 }, (_, i) => i - 9).map((n) => {
        const x = 553 + n * STEP
        return (
          <g key={n}>
            <path d={`M${x + 0.5} 0V14`} stroke="#111" />
            <path d={`M${x + 28.5} 9V14`} stroke="#111" />
            {MINOR.map((m) => (
              <path key={m} d={`M${x + m + 0.5} 12V14`} stroke="#111" />
            ))}
            {n < 19 && <text x={x + 2} y="9" className="fill-[#333] font-['Liberation_Sans'] text-[10px]">{Math.abs(n) * 1000}</text>}
          </g>
        )
      })}
      <path d="M20.5 12V14M26.5 9V14M32.5 12V14M37.5 12V14M43.5 12V14" stroke="#111" />
      <path d="M13.5 0V15M15 0V15" stroke="#f4ee5a" strokeWidth="2" />
      <circle cx="7" cy="8" r="4" fill="none" stroke="#111" />
      <path d="M7 1V4M7 12V15M0 8H3M11 8H14" stroke="#111" />
    </svg>
  )
}

function VerticalRuler() {
  return (
    <svg className="h-full w-[15px] shrink-0 bg-[#e0e0d8]" aria-hidden="true">
      <path d="M14.5 0V2000" stroke="#111" />
      {Array.from({ length: 22 }, (_, i) => i - 1).map((i) => {
        const y = 43 + i * STEP
        return (
          <g key={i}>
            <path d={`M0 ${y + 0.5}H14`} stroke="#111" />
            <path d={`M10 ${y + 28.5}H14`} stroke="#111" />
            {MINOR.map((m) => (
              <path key={m} d={`M12 ${y + m + 0.5}H14`} stroke="#111" />
            ))}
            {i >= 0 && (
              <text transform={`translate(9 ${y - 4}) rotate(-90)`} className="fill-[#222] font-['Liberation_Sans'] text-[10px]">{7000 + i * 1000}</text>
            )}
          </g>
        )
      })}
      <path d="M0 112H15" stroke="#f4ee5a" strokeWidth="4" />
      <path d="M0 112.5H15" stroke="#333" />
    </svg>
  )
}

// chords and braces of one corner truss, in a 68 x 59 box
const chords = 'M31.5 1.5 34 .5 68 58H63ZM17 11.5 19.5 10 35 38 32 39Z'
const flats = 'M0.5 56.5H66.5V59.5H0.5ZM0.5 37.5H32.5V40.5H0.5Z'
const braces = 'M4 41V56M6 41 17 56 31 41M19 12 33 5M18 15 41 17 33 38 54 39M33 39 40 49'

function Truss({ x, y, flip, hot }: { x: number; y: number; flip?: boolean; hot?: boolean }) {
  const body = (
    <g fill="none">
      {hot && <path d={`${chords}${flats}${braces}`} stroke="#ffb35c" strokeWidth="4" opacity=".8" />}
      <path d={braces} stroke={hot ? '#c96a00' : '#1c1c12'} strokeWidth={hot ? 2 : 1.5} />
      <path d={`${chords}${flats}`} stroke={hot ? '#8f4a00' : '#333'} strokeWidth="1" fill={hot ? '#ffd08c' : '#dcdcd4'} />
      {!hot && <path d="M0.5 56.5H66.5V59.5H0.5Z" stroke="#7a4300" fill="#ffc377" />}
      {hot && <path d={braces} stroke="#ee8410" strokeWidth="1" />}
    </g>
  )
  return (
    <g transform={`translate(${x} ${y})`}>
      {!hot && <rect x="0" y="0" width="67" height="59" fill="#e2e0d2" stroke="#ffce8c" strokeWidth="3.5" />}
      {flip ? <g transform="translate(0 60) scale(1 -1)">{body}</g> : body}
      {hot && <rect x="38" y={flip ? 4 : 40} width="15" height="14" fill="#f0c592" opacity=".8" />}
      <g className="fill-[#777] font-['Liberation_Sans'] text-[6px]">
        <text x="38" y={flip ? 10 : 46}>H40V</text>
        <text x="38" y={flip ? 17 : 53}>C002</text>
      </g>
    </g>
  )
}

const U = 2568 / 1568

const bigLoop: Pt[] = [
  [299, 240], [304, 233], [313, 225], [327, 217], [345, 211.5], [365, 210.5], [385, 213], [400, 217], [415, 221.5], [440, 228], [470, 234], [500, 239],
  [530, 244], [560, 251], [590, 259], [620, 269], [650, 282], [680, 297], [705, 313], [725, 332], [740, 353], [753, 378], [763, 405], [765, 430],
  [764, 465], [762, 500], [758, 535], [752, 557], [743, 575], [733, 590], [715, 605], [695, 614], [670, 618], [635, 618], [600, 616], [570, 611],
  [540, 603], [510, 591], [480, 578], [450, 562], [425, 544], [400, 525], [375, 505], [355, 488], [335, 468], [318, 453], [303, 438], [287, 420],
  [275, 403], [267, 382], [267, 365], [270, 345], [275, 328], [284, 312], [293, 298], [305, 286], [320, 273], [340, 261], [360, 252], [375, 249], [388, 249],
]

const smallLoop: Pt[] = [
  [855, 190], [835, 189], [815, 197], [793, 206], [780, 219], [767, 235], [750, 252], [737, 266], [727, 280], [724, 292], [730, 303], [745, 318],
  [765, 334], [783, 346], [800, 353], [830, 360], [860, 363], [890, 364], [915, 363], [935, 359], [948, 354], [956, 344], [959, 325], [959, 305],
  [954, 285], [946, 265], [935, 248], [920, 229], [905, 215], [890, 205], [870, 199], [849, 196],
]

const sheetMark: Pt[] = [
  [846, 1124], [868, 1123], [883, 1128], [896, 1138], [904, 1150], [909, 1165], [911, 1183], [909, 1200], [905, 1213], [898, 1230], [883, 1242],
  [864, 1256], [851, 1257], [833, 1255], [820, 1253], [812, 1240], [799, 1232], [789, 1223], [787, 1213], [789, 1197], [797, 1183], [816, 1173], [827, 1170], [843, 1171],
]

/* ---------- worksheet ---------- */

const Y = 'bg-[#fbf31e]'
const B = 'bg-black'
const W = 'bg-[#e0e0e0]'

const sheetRows: { n: string; h: string; cells: string[] }[] = [
  { n: '1', h: 'h-[18px]', cells: [Y, Y, Y, Y, Y, Y, Y] },
  { n: '2', h: 'h-[18px]', cells: [Y, B, B, B, B, B, Y] },
  { n: '3', h: 'h-[25px]', cells: [Y, B, W, W, W, B, Y] },
  { n: '4', h: 'h-[25px]', cells: [Y, B, W, W, W, B, Y] },
  { n: '5', h: 'h-[19px]', cells: [] },
  { n: '5.1', h: 'h-[18px]', cells: [Y, B, W, W, W, B, Y] },
  { n: '6', h: 'h-[18px]', cells: [Y, B, W, W, W, B, Y] },
  { n: '7', h: 'h-[18px]', cells: [Y, B, W, W, W, B, Y] },
  { n: '8', h: 'h-[18px]', cells: [Y, B, B, B, B, B, Y] },
  { n: '9', h: 'h-[18px]', cells: [Y, Y, Y, Y, Y, Y, Y] },
]

function cellText(row: string, col: number) {
  if (row === '3' && col === 2) return <span className="font-['Liberation_Sans'] text-[18px] leading-none font-bold italic underline underline-offset-2">Trussing</span>
  if (row === '4' && col === 3) return <span className="block font-['Liberation_Sans'] text-[14px] leading-[18px] font-bold italic underline underline-offset-2">QTY</span>
  if (row === '5.1' && col === 2) return 'Truss Corn Prolyte H40V-C002'
  if (row === '5.1' && col === 3) return '6'
  return null
}

function DropCell({ children, icon, tint = 'bg-[#a2cdf0]' }: { children?: ReactNode; icon?: ReactNode; tint?: string }) {
  return (
    <td className={`border-y-2 border-[#222] border-t-[#4a3a30] p-0 leading-none ${tint}`}>
      <div className="flex h-[15px] items-center justify-end">
        {children && <span className="pr-1">{children}</span>}
        <button type="button" aria-label="Column options" className="flex h-[15px] w-4 items-center justify-center border border-[#888] bg-[#e6e6e6]">{icon ?? <Tri />}</button>
      </div>
    </td>
  )
}

function Worksheet() {
  return (
    <section aria-label="Trussing Worksheet" className="absolute top-[792px] left-[89px] flex h-[311px] w-[664px] flex-col border border-[#777] bg-[#3e3e3e] px-[3px] pb-1">
      <div className="flex h-[26px] shrink-0 items-center pt-px pl-[3px]">
        <h2 className="flex-1">Trussing Worksheet @ 90%</h2>
        <div className="flex gap-[2px]">
          <MiniIcon kind="help" />
          <MiniIcon kind="pin" />
          <MiniIcon kind="close" />
        </div>
      </div>
      <div className="flex flex-1 flex-col bg-[#dedede] text-black">
        <nav className="flex h-[27px] items-center gap-[17px] border-b border-[#aaa] pl-2" aria-label="Worksheet menu">
          {['File', 'Edit', 'View', 'Insert', 'Format', 'Database', 'Help'].map((m) => (
            <button key={m} type="button">{m}</button>
          ))}
        </nav>
        <div className="flex h-8 items-center border-b border-[#999] pr-1">
          <span className="w-[71px] pl-[27px]">A5</span>
          <button type="button" aria-label="Cancel"><Svg w={16} h={14}><path d="M3 2 12 13M12 2 3 13" stroke="#e84a3f" strokeWidth="3" /></Svg></button>
          <button type="button" aria-label="Accept" className="mx-1"><Svg w={16} h={16}><path d="M2 9 6 13 13 2" stroke="#0d7a2a" strokeWidth="4" /><path d="M2 9 6 13 13 2" stroke="#1fd454" strokeWidth="2" /></Svg></button>
          <input aria-label="Formula" className="h-[21px] min-w-0 flex-1 border border-[#777] bg-[#e0e0e0] outline-none" />
          <Svg w={14} h={10} className="ml-[2px]"><path d="M3 2 7 7 11 2" /></Svg>
        </div>
        <table className="mt-px ml-px w-[626px] table-fixed border-collapse font-['DejaVu_Sans'] text-[12px]">
          <colgroup>
            <col className="w-16" />
            <col className="w-[25px]" />
            <col className="w-[17px]" />
            <col className="w-[383px]" />
            <col className="w-[65px]" />
            <col className="w-[29px]" />
            <col className="w-[20px]" />
            <col className="w-[23px]" />
          </colgroup>
          <thead>
            <tr className="h-[17px] bg-[#95adc2] font-['Liberation_Sans'] text-[12px] leading-none text-[#111]">
              <td className="border border-black bg-[#dedede] p-0" />
              {['A', 'B', 'C', 'D', 'E', 'F', 'G'].map((c) => (
                <th key={c} className="border border-black p-0 font-normal">{c}</th>
              ))}
            </tr>
          </thead>
          <tbody>
            {sheetRows.map((r) => (
              <tr key={r.n} className={r.h}>
                <th scope="row" className={`border border-black p-0 font-['Liberation_Sans'] text-[12px] leading-none font-normal ${r.n === '5' ? 'bg-[#95adc2]' : 'bg-[#dedede]'}`}>
                  <span className="flex items-center pr-[3px] pl-[6px]">
                    <span className="w-[6px]">{r.n === '5' && <Svg w={6} h={6}><path d="M3 0 6 3 3 6 0 3Z" {...F} /></Svg>}</span>
                    <span className="flex-1 text-center">{r.n}</span>
                    <span className="w-1">{r.n !== '5.1' && <Svg w={4} h={8}><path d="M0 0 4 4 0 8Z" {...F} /></Svg>}</span>
                  </span>
                </th>
                {r.n === '5' ? (
                  <>
                    <DropCell tint="bg-[#e6e6e6]" />
                    <DropCell tint="bg-[#e6e6e6]" />
                    <DropCell icon={<Svg w={12} h={13}><path d="M5 11V2M2.5 4.5 5 1.5 7.5 4.5M10 7V13" strokeWidth="1.2" /></Svg>}>1</DropCell>
                    <DropCell icon={<Svg w={8} h={8}><path d="M0 5H6M3 2V8" strokeWidth="1.2" /></Svg>}>6</DropCell>
                    <DropCell />
                    <DropCell />
                    <DropCell />
                  </>
                ) : (
                  r.cells.map((c, i) => (
                    <td key={i} className={`border border-[#c4c4c4] px-[2px] py-0 leading-none ${c} ${r.n === '5.1' && i === 3 ? 'text-right' : ''} ${r.n === '4' ? 'align-bottom' : ''}`}>
                      {cellText(r.n, i)}
                    </td>
                  ))
                )}
              </tr>
            ))}
          </tbody>
        </table>
      </div>
    </section>
  )
}

function DrawingArea() {
  return (
    <main className="ml-1 flex min-w-0 flex-1 flex-col">
      <div className="flex h-7 shrink-0 items-end pl-[7px]">
        <button type="button" className="h-[23px] w-[195px] text-left">AIG 2024 - Draft 3 Version 1 MASTE...</button>
        <div className="flex h-6 w-[78px] items-center justify-between bg-[#2d2d2d] pl-[5px]">
          <button type="button" className="font-bold">01.vwx</button>
          <MiniIcon kind="close" />
        </div>
        <button type="button" aria-label="New file" className="ml-[5px] flex h-6 items-center"><Svg w={12} h={12}><path d="M6 1V11M1 6H11" strokeWidth="2" /></Svg></button>
        <div className="flex-1" />
        <button type="button" aria-label="Open files" className="mr-[3px] mb-[5px] flex h-[14px] w-[14px] items-center justify-center border border-[#4d4d4d] text-[#999]"><Tri /></button>
      </div>
      <HorizontalRuler />
      <div className="flex min-h-0 flex-1">
        <VerticalRuler />
        <div className="relative flex-1 overflow-hidden bg-[#e0e0d8]">
          <div className="mt-[762px] h-px bg-[#cfd3d6]" />
          <svg className="absolute inset-0 size-full" role="img" aria-label="Corner trusses">
            <g transform="translate(-217 -217)">
              <Truss x={620} y={532} />
              <Truss x={741} y={500} />
              <Truss x={930} y={534} flip />
              <Truss x={581} y={694} />
              <Truss x={829} y={736} />
              <Truss x={1091} y={730} flip />
              <Truss hot x={1280} y={390} />
              <Truss hot x={1421} y={415} />
              <Truss hot x={1321} y={517} flip />
            </g>
          </svg>
          <Worksheet />
          <svg className="pointer-events-none absolute inset-0 size-full" aria-hidden="true">
            <g transform="translate(-217 -217)" fill="none" stroke="#e81c1c" strokeWidth="6" strokeLinecap="round">
              <path d={smooth(bigLoop, U)} />
              <path d={smooth(smallLoop, U)} />
              <path d={smooth(sheetMark)} />
            </g>
          </svg>
        </div>
      </div>
    </main>
  )
}

/* ---------- object info ---------- */

type Row =
  | { kind: 'text' | 'field'; label: string; value?: string }
  | { kind: 'head' | 'check' | 'button' | 'disabled' | 'line'; label: string }

const infoRows: Row[] = [
  { kind: 'field', label: 'Roll Angle:' },
  { kind: 'field', label: 'Hanging Angle:', value: '0.00°' },
  { kind: 'field', label: 'Rotation:', value: '0.00°' },
  { kind: 'head', label: 'Properties' },
  { kind: 'text', label: 'Symbol:', value: 'Truss Corn Prolyte H40V-C002' },
  { kind: 'text', label: 'Type:', value: 'H40V' },
  { kind: 'field', label: 'Name:', value: 'H40V-C002' },
  { kind: 'field', label: 'ID:' },
  { kind: 'field', label: 'Position Name:' },
  { kind: 'text', label: 'Height:', value: '387' },
  { kind: 'text', label: 'Width:', value: '387' },
  { kind: 'field', label: 'Total Weight:', value: '12.13 kg' },
  { kind: 'text', label: 'Distributed Weight:', value: '0.00 kg/m' },
  { kind: 'text', label: 'Length:', value: '0' },
  { kind: 'text', label: 'Cross Section:', value: 'H40V' },
  { kind: 'text', label: 'Connectable with:', value: 'H40V' },
  { kind: 'text', label: 'Truss System:' },
  { kind: 'head', label: 'Display' },
  { kind: 'check', label: 'Draw 3D only' },
  { kind: 'check', label: 'Center line' },
  { kind: 'head', label: 'Summary Selection' },
  { kind: 'line', label: 'Total Weight: 109.17 kg' },
  { kind: 'line', label: 'Total Length: 0' },
  { kind: 'head', label: 'Actions' },
  { kind: 'disabled', label: 'Select Objects of Same Symbol' },
  { kind: 'disabled', label: 'Select Objects of Same Cross Section' },
  { kind: 'disabled', label: 'Select System Objects' },
  { kind: 'disabled', label: 'Change Trim Height of System...' },
  { kind: 'disabled', label: 'Rename Truss System...' },
  { kind: 'button', label: 'Change Configuration...' },
  { kind: 'button', label: 'Convert to Hanging Position' },
]

function Head({ label, sub }: { label: string; sub?: boolean }) {
  return (
    <div className="flex h-[19px] items-center gap-1 pl-[5px]">
      {sub && <svg width="13" height="6" aria-hidden="true"><path d="M5 0V6H0Z" fill="#888" /></svg>}
      <h3 className="font-bold">{label}</h3>
      <span className="h-[2px] flex-1 bg-[#4c4c4c]" />
    </div>
  )
}

function InfoButton({ label, disabled }: { label: string; disabled?: boolean }) {
  return (
    <button type="button" disabled={disabled} className={`h-[18px] w-full border border-[#484848] ${disabled ? 'text-[#777]' : 'bg-[#404040]'}`}>
      {label}
    </button>
  )
}

function InfoRow({ row }: { row: Row }) {
  if (row.kind === 'head') return <Head label={row.label} />
  if (row.kind === 'button' || row.kind === 'disabled') {
    return <div className="flex h-[19px] items-center"><InfoButton label={row.label} disabled={row.kind === 'disabled'} /></div>
  }
  if (row.kind === 'check') {
    return (
      <label className="flex h-[19px] items-center gap-[7px] pl-[3px]">
        <input type="checkbox" className="size-[11px] appearance-none border border-[#777]" />
        {row.label}
      </label>
    )
  }
  if (row.kind === 'line') return <p className="flex h-[19px] items-center pl-[5px]">{row.label}</p>
  const value = row.value ?? ''
  return (
    <label className="flex h-[19px] items-center pl-[5px]">
      <span className="w-[161px]">{row.label}</span>
      {row.kind === 'field' ? (
        <input defaultValue={value} className="h-[17px] min-w-0 flex-1 border border-[#484848] bg-[#3b3b3b] pl-[3px] outline-none" />
      ) : (
        <span className="pl-1">{value}</span>
      )}
    </label>
  )
}

function InfoSelect({ label, value }: { label: string; value: string }) {
  return (
    <label className="flex h-[19px] items-center pl-[5px]">
      <span className="w-[34px]">{label}</span>
      <span className="relative flex h-[17px] flex-1 items-center border border-[#484848] bg-[#3b3b3b]">
        <select className="size-full appearance-none pl-[2px] outline-none"><option>{value}</option></select>
        <span className="pointer-events-none absolute right-0 flex h-full w-[19px] items-center justify-center border-l border-[#484848]"><Tri /></span>
      </span>
    </label>
  )
}

function ObjectInfo() {
  return (
    <aside className="relative ml-[7px] flex w-[332px] shrink-0 flex-col bg-[#333]">
      <div className="bg-[#404040]"><PanelHeader title="Object Info - Shape" help /></div>
      <div className="flex h-[33px] shrink-0 items-end bg-[#404040]">
        <button type="button" className="flex h-[30px] w-[70px] items-center gap-[6px] bg-[#333] pl-[7px]">
          <Svg w={19} h={18}><path d="M7 1H18V14H7Z" {...F} /><circle cx="6.5" cy="11.5" r="6" fill="#dedede" stroke="#333" /></Svg>
          Shape
        </button>
        <button type="button" className="flex h-[30px] items-center border-b border-[#555] pl-[6px]">
          <Svg w={21} h={18}><path d="M1 3H20V17H16L13 14 10 17 7 14 4 17H1Z" {...F} /><path d="M5 6H16M5 9H12" stroke="#404040" /></Svg>
          <span className="ml-[6px] border-r border-[#777] pr-[6px]">Data</span>
        </button>
        <button type="button" className="flex h-[30px] flex-1 items-center border-b border-[#555] pl-[6px]">
          <Svg w={22} h={18} className="mr-[5px]"><path d="M5 5H18Q21 12 16 17H9Q5 12 5 5ZM9 1H14V4H9Z" {...F} /><path d="M6 10 2 4M18 7Q22 6 20 10" strokeWidth="2" /></Svg>
          Render
        </button>
      </div>
      <div className="flex h-[27px] shrink-0 items-center pr-[7px] pl-[3px]">
        <h3 className="flex-1 font-bold">9 Truss Objects</h3>
        <Svg w={62} h={12}>
          <g {...F}><circle cx="3.5" cy="6" r="4" /><circle cx="12.5" cy="6" r="4" /><circle cx="21.5" cy="6" r="4" /><circle cx="47.5" cy="6" r="5" /><path d="M57 1 62 6 57 11Z" /><path d="M39 1 35 6 39 11Z" fill="#555" /></g>
        </Svg>
      </div>
      <div className="flex min-h-0 flex-1 flex-col border border-t-2 border-[#4f4f4f] font-['Liberation_Sans'] text-[11px]">
        <InfoSelect label="Class:" value="Kinesys-Front Triangles" />
        <InfoSelect label="Layer:" value="Main" />
        <div className="flex border-y border-[#4a4a4a]">
          <div className="flex w-[45px] flex-col items-center justify-around pr-3">
            <button type="button" aria-label="Layer plane" className="flex h-5 w-6 items-center justify-center bg-[#616161]">{planeIcon}</button>
            <button type="button" aria-label="Working plane"><Svg w={20} h={20}><rect x="1" y="1" width="18" height="18" rx="2" fill="#55304f" stroke="#f57bf0" /><path d="M10 1V19M1 10H19" stroke="#f57bf0" /></Svg></button>
          </div>
          <div className="flex-1">
            {['X:', 'Y:', 'Z:'].map((a) => (
              <label key={a} className="flex h-[19px] items-center text-[12px] first:h-[18px] last:h-[18px]">
                <span className="w-6">{a}</span>
                <input className="h-[17px] min-w-0 flex-1 border border-[#484848] bg-[#3b3b3b] outline-none" />
              </label>
            ))}
          </div>
        </div>
        {infoRows.map((r) => (
          <InfoRow key={r.kind + r.label} row={r} />
        ))}
        <Head sub label="Equipment Subparts" />
        <p className="flex h-[19px] items-center pl-[22px]"><span className="w-[148px]">Prolyte H40V-C002, 1200 x...</span>1</p>
        <Head label="Equipment Virtual Parts" />
        <div className="flex h-[19px] items-center"><InfoButton label="Edit Virtual Parts..." /></div>
        <div className="flex h-[19px] items-center"><InfoButton label="Assign Sources..." /></div>
      </div>
      <label className="flex h-[25px] shrink-0 items-center pl-1 text-[#8a8a8a]">
        <span className="w-[35px]">Name:</span>
        <input placeholder="*SELECTED*" className="h-[21px] min-w-0 flex-1 border border-[#8c8c8c] bg-[#3b3b3b] pb-1 pl-px outline-none placeholder:text-[#777]" />
      </label>
      {/* red underline across the roll angle field */}
      <svg width="100" height="20" className="pointer-events-none absolute top-[190px] left-[154px]" aria-hidden="true">
        <path d="M5 7C20 7 32 8 42 10S52 14 58 13 70 13 77 13 88 12 92 11" fill="none" stroke="#e81c1c" strokeWidth="6" strokeLinecap="round" />
      </svg>
    </aside>
  )
}

/* ---------- navigation ---------- */

function Navigation() {
  const tab = 'flex h-[30px] w-[38px] items-center justify-center'
  return (
    <aside className="ml-[7px] flex w-[400px] shrink-0 flex-col bg-[#333]">
      <div className="bg-[#404040]"><PanelHeader title="Navigation - Sheet Layers" help /></div>
      <div className="flex h-[33px] shrink-0 items-end border-b border-[#555] bg-[#404040]">
        <button type="button" aria-label="Classes" className="flex h-[30px] w-9 items-center justify-center">
          <Svg w={22} h={20}><g {...F}><circle cx="3" cy="12" r="2.5" /><circle cx="10" cy="8" r="2.5" /><circle cx="12" cy="14" r="2.5" /><circle cx="19" cy="3" r="2.5" /><circle cx="19" cy="11" r="2" /><circle cx="7" cy="18" r="2" /><circle cx="18" cy="18" r="2" /></g><path d="M3 12 19 3" strokeWidth="1" /></Svg>
        </button>
        <span className="mb-[6px] h-[18px] w-px bg-[#777]" />
        <button type="button" aria-label="Design layers" className={tab}><Svg w={22} h={20}><path d="M1 6 11 1 21 6 11 11Z" {...F} /><path d="M1 10 11 15 21 10M1 14 11 19 21 14" strokeWidth="2" /></Svg></button>
        <button type="button" aria-label="Sheet layers" className={`${tab} bg-[#2b2b2b]`}><Svg w={24} h={20}><path d="M2 2H22V18H2Z" strokeWidth="3" /><path d="M15 13H22V18H15Z" {...F} /></Svg></button>
        <button type="button" aria-label="Viewports" className={tab}><Svg w={22} h={20}><path d="M1 5V1H5M17 1H21V5M21 15V19H17M5 19H1V15" /><path d="M4 17V8L8 3 11 7 14 3 18 8V17Z" {...F} /></Svg></button>
        <span className="mb-[6px] h-[18px] w-px bg-[#777]" />
        <button type="button" aria-label="Saved views" className={tab}><Svg w={24} h={20}><path d="M1 1H11L15 6V10L9 19H1Z" {...F} /><path d="M9 14Q16 6 24 14 16 21 9 14Z" fill="#dedede" stroke="#404040" /><circle cx="16.5" cy="14" r="2.5" fill="#404040" stroke="none" /></Svg></button>
        <span className="mb-[6px] h-[18px] w-px bg-[#777]" />
        <button type="button" aria-label="References" className={tab}><Svg w={24} h={20}><path d="M5 1H16L21 6V19H5Z" {...F} /><path d="M1 17Q3 9 10 12L15 6M12 15 18 9 18 5" stroke="#404040" strokeWidth="2" /><path d="M1 16Q3 7 9 9" strokeWidth="2" /></Svg></button>
      </div>
      <label className="mt-[9px] flex h-[23px] shrink-0 items-center pl-1">
        <span className="w-[31px]">Filter:</span>
        <span className="relative flex h-full flex-1 items-center border border-[#4a4a4a] bg-[#3b3b3b]">
          <select className="size-full appearance-none pl-[2px] outline-none"><option>&lt;All Layers&gt;</option></select>
          <span className="pointer-events-none absolute right-0 flex h-full w-[18px] items-center justify-center bg-[#454545]"><Tri /></span>
        </span>
      </label>
      <div className="mt-[11px] flex h-[23px] shrink-0 items-center border border-[#555] bg-[#3b3b3b] pr-[3px]">
        <input aria-label="Search" placeholder="Search" className="h-full min-w-0 flex-1 pl-[3px] outline-none placeholder:text-[#8c8c8c]" />
        <Svg w={16} h={16} className="text-[#0a6fc8]"><circle cx="10" cy="6" r="5" /><path d="M6.5 9.5 1 15" /></Svg>
      </div>
      <div className="mt-[10px] flex min-h-0 flex-1 flex-col border-2 border-[#4f4f4f] bg-[#3b3b3b]">
        <div className="bg-[#404040]">
          <table className="w-[312px] table-fixed border-collapse">
            <thead>
              <tr className="h-[21px] text-left">
                <td className="w-[52px] border-r border-[#666]" />
                <th className="w-[99px] border-r border-[#666] pl-[5px] font-normal">Sheet Number</th>
                <th className="w-[130px] border-r border-[#666] pl-[5px] font-normal">Sheet Title</th>
                <th className="w-[31px] border-r border-[#666] pl-1 font-normal">
                  <span className="flex items-center gap-[6px]"># <svg width="9" height="5" aria-hidden="true"><path d="M0 5 4.5 0 9 5Z" fill="#dedede" /></svg></span>
                </th>
              </tr>
            </thead>
          </table>
        </div>
        <p className="mt-[50px] text-center">There are no items to show in this view</p>
      </div>
    </aside>
  )
}

export default function App() {
  return (
    <div className="flex h-screen overflow-hidden bg-[#191919] font-['Open_Sans',sans-serif] text-[11px] leading-4 text-[#dedede]">
      <div className="flex w-2 shrink-0 flex-col justify-end bg-[radial-gradient(circle_at_0_50%,#050505_30%,#1e1e1e_60%)] bg-size-[8px_28px]">
        <svg width="8" height="75" aria-hidden="true"><path d="M0 7 8 0V67H0Z" fill="#ffe011" /><path d="M0 67H8V75H0Z" fill="#3a3520" /></svg>
      </div>
      <div className="flex min-w-0 flex-1 flex-col bg-[#404040]">
        <TitleBar />
        <Ribbon />
        <ModeBar />
        <div className="flex min-h-0 flex-1">
          <LeftPalettes />
          <DrawingArea />
          <ObjectInfo />
          <Navigation />
        </div>
        <footer className="flex h-[27px] shrink-0 items-center bg-[#5c5c5c] pl-1">
          <span className="mr-4">Rigging Load Tool</span>
          <span className="flex-1">Insert Point Load: Click into the drawing to insert a new point load.</span>
          <span className="w-[106px]">X: -9640</span>
          <span className="w-[182px]">Y: -8220</span>
        </footer>
        <div className="h-[7px] shrink-0 bg-linear-to-r from-[#303030] from-90% to-[#38351f]" />
      </div>
    </div>
  )
}
